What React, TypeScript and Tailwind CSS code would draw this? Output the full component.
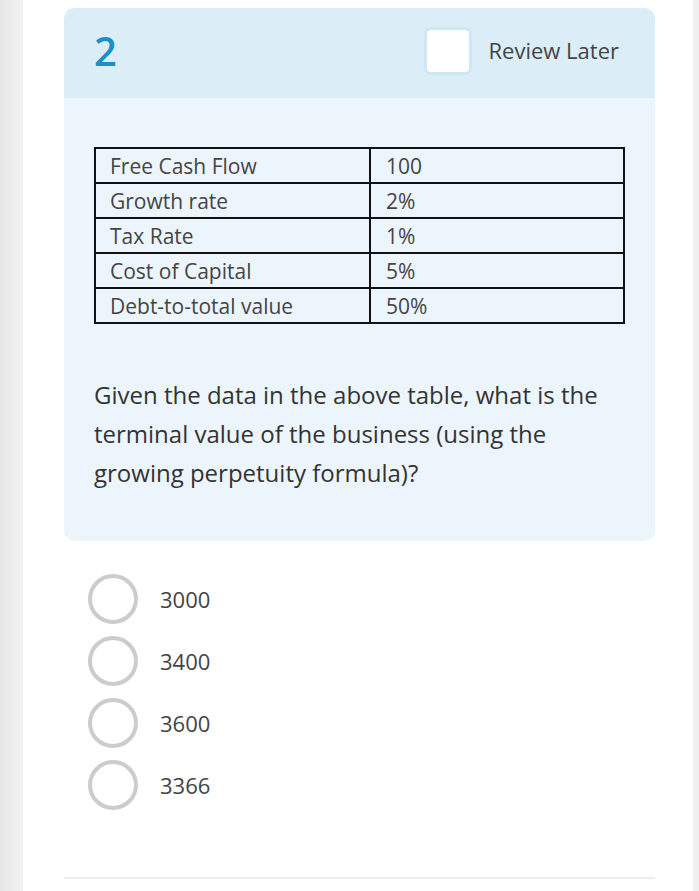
import React from "react";

const rows: [string, string][] = [
  ["Free Cash Flow", "100"],
  ["Growth rate", "2%"],
  ["Tax Rate", "1%"],
  ["Cost of Capital", "5%"],
  ["Debt-to-total value", "50%"],
];

const options = ["3000", "3400", "3600", "3366"];

export default function App() {
  return (
    <div
      className="flex h-[891px] w-[699px] overflow-hidden bg-white"
      style={{ fontFamily: '"Open Sans", "Noto Sans", sans-serif' }}
    >
      <div className="h-full w-[23px] shrink-0 bg-gradient-to-r from-[#e6e6e6] to-[#f3f3f3]" />
      <div className="flex h-full w-[670px] shrink-0 flex-col">
        <div className="ml-[41px] mt-[8px] w-[591px] overflow-hidden rounded-[10px]">
          <div className="flex h-[90px] items-center justify-between bg-[#dbeef8] pb-[5px] pl-[30px] pr-[36px]">
            <span className="text-[40px] font-semibold leading-none text-[#1b8fc8]">2</span>
            <div className="flex items-center gap-[17px]">
              <div className="h-[48px] w-[48px] rounded-[7px] border-[3px] border-[#cfe6f3] bg-white" />
              <span className="text-[22px] text-[#444]">Review Later</span>
            </div>
          </div>
          <div className="bg-[#edf5fc] pb-[49px] pl-[30px] pr-[30px] pt-[49px]">
            <table className="w-[531px] border-collapse border-2 border-[#111] text-[21px] text-[#444]">
              <tbody>
                {rows.map(([k, v]) => (
                  <tr key={k} className="h-[35px]">
                    <td className="w-[275px] border-2 border-[#111] px-[14px] py-0 leading-[30px]">{k}</td>
                    <td className="border-2 border-[#111] px-[15px] py-0 leading-[30px]">{v}</td>
                  </tr>
                ))}
              </tbody>
            </table>
            <p className="mt-[51px] w-[531px] text-[24px] leading-[39px] text-[#333]">
              Given the data in the above table, what is the terminal value of the business (using the growing perpetuity formula)?
            </p>
          </div>
        </div>
        <div className="ml-[65px] mt-[33px] flex flex-col gap-[12px]">
          {options.map((o) => (
            <div key={o} className="flex h-[50px] items-center gap-[22px]">
              <div className="h-[50px] w-[50px] rounded-full border-[4px] border-[#cccccc] bg-white" />
              <span className="text-[22px] text-[#444]">{o}</span>
            </div>
          ))}
        </div>
        <div className="ml-[41px] mt-[67px] h-[2px] w-[591px] bg-[#eeeeee]" />
      </div>
      <div className="h-full w-[6px] shrink-0 bg-[#f0f0f0]" />
    </div>
  );
}
